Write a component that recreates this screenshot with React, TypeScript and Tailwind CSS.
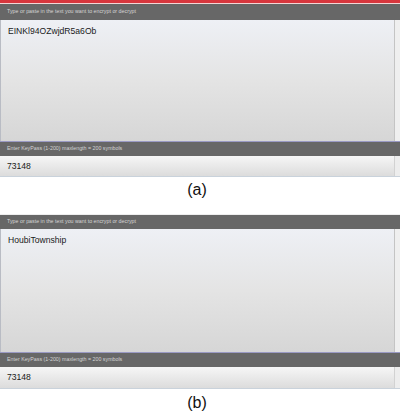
import React from "react";

const FONT = { fontFamily: '"Liberation Sans", Arial, sans-serif' };

function Header({ text, h, accent }: { text: string; h: string; accent?: boolean }) {
  return (
    <div
      className={`${h} flex items-center px-[7px] bg-[#676767] text-[#d4d4d4] text-[5.3px] leading-none ${
        accent ? "border-t border-[#9a9ac4]" : ""
      }`}
    >
      {text}
    </div>
  );
}

function Panel({
  value,
  label,
  top,
  areaH,
  inputH,
  labelH,
}: {
  value: string;
  label: string;
  top: React.ReactNode;
  areaH: string;
  inputH: string;
  labelH: string;
}) {
  return (
    <div className="flex flex-col">
      {top}
      {/* textarea */}
      <div className={`${areaH} flex border-l border-[#b9bcc4] bg-gradient-to-b from-[#eef0f5] via-[#e4e4e4] to-[#d6d6d6]`}>
        <div className="flex-1 px-[7px] pt-[7px] text-[8.6px] text-[#1a1a1a] leading-none">{value}</div>
        <div className="w-[6px] border-l border-[#c4c4c4] bg-[#efefef]" />
      </div>
      <Header text="Enter KeyPass (1-200) maxlength = 200 symbols" h="h-[15px]" accent />
      {/* keypass input */}
      <div className={`${inputH} flex border-b border-[#c9d2db] bg-gradient-to-b from-[#f6f6f6] to-[#dcdcdc]`}>
        <div className="flex-1 flex items-center px-[7px] text-[8.6px] text-[#1a1a1a] leading-none">73148</div>
        <div className="w-[6px] border-l border-[#d2d2d2] bg-[#ededed]" />
      </div>
      <div className={`${labelH} flex justify-center`}>
        <span className="text-[16px] leading-none text-[#111] ml-[-6px]">{label}</span>
      </div>
    </div>
  );
}

export default function App() {
  return (
    <div className="w-[400px] h-[413px] bg-white overflow-hidden" style={FONT}>
      <Panel
        value="EINKl94OZwjdR5a6Ob"
        label="(a)"
        areaH="h-[121px]"
        inputH="h-[21px]"
        labelH="h-[37px] pt-[5px]"
        top={
          <>
            <div className="h-[3px] bg-[#d7363d]" />
            <div className="h-px bg-[#f3d6d6]" />
            <Header text="Type or paste in the text you want to encrypt or decrypt" h="h-4" />
          </>
        }
      />
      <Panel
        value="HoubiTownship"
        label="(b)"
        areaH="h-[123px]"
        inputH="h-[22px]"
        labelH="h-[24px] pt-[6px]"
        top={
          <>
            <div className="h-px bg-[#eeeeee]" />
            <Header text="Type or paste in the text you want to encrypt or decrypt" h="h-[14px]" />
          </>
        }
      />
    </div>
  );
}
